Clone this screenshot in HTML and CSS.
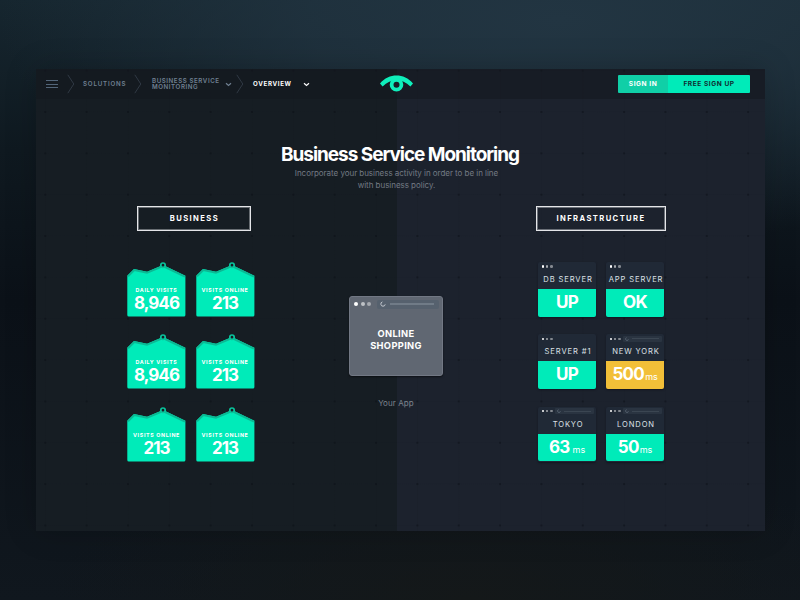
FILE: index.html
```html
<!DOCTYPE html>
<html lang="en">
  <head>
    <meta charset="utf-8">
    <title>Business Service Monitoring</title>
    <link rel="stylesheet" href="styles.css">
  </head>
  <body>
    <!-- shared shapes -->
    <svg class="defs" width="0" height="0">
      <symbol id="crumb" viewBox="0 0 8 20"><path d="M.8 .8 6.8 10 .8 19.2"/></symbol>
      <symbol id="down" viewBox="0 0 7 5"><path d="M1 1.2 3.5 3.4 6 1.2"/></symbol>
      <symbol id="spin" viewBox="0 0 6 6"><path d="M2.4 .9A2.2 2.2 0 1 0 5.2 3.4"/></symbol>
      <symbol id="chart" viewBox="0 0 59 56">
        <path fill="#00ebb9" d="M.3 13.8 7 7 20 9.8 36 3 58.4 13.8V53Q58.4 54.5 56.9 54.5H1.8Q.3 54.5 .3 53Z"/>
        <path fill="none" stroke="#0bb994" stroke-width="2" d="M1 14.2 7.3 8 20 10.8 36 4.2 57.9 14.6"/>
        <circle cx="36" cy="3.2" r="2.2" fill="#171d24" stroke="#09c49c" stroke-width="1.7"/>
      </symbol>
    </svg>

    <div class="panel">
      <header class="header">
        <nav class="nav">
          <span class="burger"><i></i><i></i><i></i></span>
          <svg class="crumb"><use href="#crumb"/></svg>
          <a class="link solutions">SOLUTIONS</a>
          <svg class="crumb"><use href="#crumb"/></svg>
          <a class="link service">BUSINESS SERVICE<br>MONITORING</a>
          <svg class="down"><use href="#down"/></svg>
          <svg class="crumb"><use href="#crumb"/></svg>
          <a class="link overview">OVERVIEW</a>
          <svg class="down white"><use href="#down"/></svg>
        </nav>
        <svg class="logo" viewBox="0 0 34 18">
          <path fill="#0fefbb" d="M0 8.4C9-2.2 24-2.2 33 8.4L30.4 11.6C22 3.2 11 3.2 2.6 11.6Z"/>
          <circle cx="16.5" cy="9.8" r="4.9" fill="#181e26" stroke="#0fefbb" stroke-width="3.8"/>
        </svg>
        <div class="auth">
          <a class="signin">SIGN IN</a>
          <a class="signup">FREE SIGN UP</a>
        </div>
      </header>

      <div class="intro">
        <h1>Business Service Monitoring</h1>
        <p>Incorporate your business activity in order to be in line<br>with business policy.</p>
      </div>

      <main class="content">
        <section class="business">
          <h2 class="label">BUSINESS</h2>
          <div class="cards">
            <div class="stat"><svg><use href="#chart"/></svg><div><small>DAILY VISITS</small><b>8,946</b></div></div>
            <div class="stat"><svg><use href="#chart"/></svg><div><small>VISITS ONLINE</small><b>213</b></div></div>
            <div class="stat"><svg><use href="#chart"/></svg><div><small>DAILY VISITS</small><b>8,946</b></div></div>
            <div class="stat"><svg><use href="#chart"/></svg><div><small>VISITS ONLINE</small><b>213</b></div></div>
            <div class="stat"><svg><use href="#chart"/></svg><div><small>VISITS ONLINE</small><b>213</b></div></div>
            <div class="stat"><svg><use href="#chart"/></svg><div><small>VISITS ONLINE</small><b>213</b></div></div>
          </div>
        </section>

        <section class="app">
          <div class="window">
            <div class="bar"><i></i><i></i><i></i><span class="url"><svg><use href="#spin"/></svg><em></em></span></div>
            <div class="name">ONLINE<br>SHOPPING</div>
          </div>
          <p>Your App</p>
        </section>

        <section class="infra">
          <h2 class="label">INFRASTRUCTURE</h2>
          <div class="cards">
            <div class="server">
              <div class="bar"><i></i><i></i><i></i></div>
              <div class="name">DB SERVER</div>
              <div class="value">UP</div>
            </div>
            <div class="server">
              <div class="bar"><i></i><i></i><i></i></div>
              <div class="name">APP SERVER</div>
              <div class="value">OK</div>
            </div>
            <div class="server">
              <div class="bar"><i></i><i></i><i></i></div>
              <div class="name">SERVER #1</div>
              <div class="value">UP</div>
            </div>
            <div class="server">
              <div class="bar"><i></i><i></i><i></i><span class="url"><svg><use href="#spin"/></svg><em></em></span></div>
              <div class="name">NEW YORK</div>
              <div class="value warn">500<small>ms</small></div>
            </div>
            <div class="server">
              <div class="bar"><i></i><i></i><i></i><span class="url"><svg><use href="#spin"/></svg><em></em></span></div>
              <div class="name">TOKYO</div>
              <div class="value">63<small class="spaced">ms</small></div>
            </div>
            <div class="server">
              <div class="bar"><i></i><i></i><i></i><span class="url"><svg><use href="#spin"/></svg><em></em></span></div>
              <div class="name">LONDON</div>
              <div class="value">50<small>ms</small></div>
            </div>
          </div>
        </section>
      </main>
    </div>
  </body>
</html>
```
FILE: styles.css
```css
* {
  box-sizing: border-box;
}
body {
  margin: 0;
  width: 800px;
  height: 600px;
  padding: 69px 35px 0 36px;
  overflow: hidden;
  font-family: Inter, sans-serif;
  color: #fff;
  background:
    radial-gradient(ellipse 560px 230px at 560px 20px, #223542 0%, rgba(34, 53, 66, 0.75) 45%, rgba(34, 53, 66, 0) 100%),
    radial-gradient(ellipse 420px 150px at 470px 600px, #141819 0%, rgba(20, 24, 25, 0) 100%),
    linear-gradient(#16262f 0, #0f1920 150px, #0b1118 300px, #10171e 600px);
}
h1, h2, p {
  margin: 0;
}
svg {
  display: block;
  flex: none;
}
.defs {
  position: absolute;
}

/* two-tone panel with dotted grid */
.panel {
  width: 729px;
  height: 462px;
  background:
    radial-gradient(circle, rgba(8, 12, 18, 0.45) 0.6px, transparent 1.3px) -11.4px -19px / 41.35px 41.35px,
    linear-gradient(rgba(10, 15, 22, 0.06) 1px, transparent 1px) 0 1px / 41.35px 41.35px,
    linear-gradient(90deg, rgba(10, 15, 22, 0.06) 1px, transparent 1px) 9px 0 / 41.35px 41.35px,
    linear-gradient(90deg, #161d23 361px, #1c222d 361px);
  box-shadow: 0 0 30px rgba(0, 0, 0, 0.2);
}

.header {
  display: flex;
  align-items: center;
  height: 30px;
  padding-right: 15px;
  background: rgba(20, 24, 31, 0.55);
}
.nav {
  display: flex;
  align-items: center;
  width: 344px;
  padding-left: 10px;
}
.burger {
  display: grid;
  gap: 2.5px;
  width: 12px;
  margin-right: 9px;
}
.burger i {
  height: 1px;
  background: #53667a;
}
.crumb {
  width: 8px;
  height: 20px;
  fill: none;
  stroke: #303944;
}
.link {
  font-size: 6.2px;
  line-height: 6px;
  font-weight: 600;
  letter-spacing: 0.8px;
  color: #708092;
  white-space: nowrap;
}
.solutions {
  width: 51px;
  margin-left: 8px;
}
.service {
  width: 73px;
  margin-left: 10px;
  letter-spacing: 0.56px;
}
.overview {
  width: 50px;
  margin-left: 9px;
  font-weight: 700;
  letter-spacing: 0.66px;
  color: #fff;
}
.down {
  width: 7px;
  height: 5px;
  margin-right: 4px;
  fill: none;
  stroke: #708092;
  stroke-width: 1.2;
}
.down.white {
  stroke: #fff;
}
.logo {
  width: 34px;
  height: 18px;
}
.auth {
  display: flex;
  margin-left: auto;
  font-size: 6.6px;
  line-height: 18px;
  font-weight: 700;
  text-align: center;
  letter-spacing: 0.55px;
  border-radius: 1px;
  overflow: hidden;
}
.signin {
  width: 50px;
  background: #10cfa7;
}
.signup {
  width: 82px;
  color: #102b31;
  background: #00ebb9;
}

.intro {
  height: 107px;
  padding-top: 43px;
  text-align: center;
}
.intro h1 {
  font-size: 19px;
  line-height: 26px;
  font-weight: 700;
  letter-spacing: -1.04px;
  margin-left: -1px;
}
.intro p {
  margin: -1px 8px 0 0;
  font-size: 8px;
  line-height: 12px;
  letter-spacing: -0.04px;
  color: #737a84;
}

.content {
  display: flex;
  padding-left: 91px;
}
.label {
  height: 25px;
  padding-top: 1px;
  font-size: 7.6px;
  line-height: 22px;
  font-weight: 700;
  letter-spacing: 1.4px;
  text-align: center;
  border: 1px solid #e4e5e8;
  box-shadow: inset 0 0 0 1px rgba(228, 229, 232, 0.4);
}
.business .label {
  width: 114px;
  margin-left: 10.4px;
}
.infra .label {
  width: 130px;
  margin-left: -2px;
}
.cards {
  display: grid;
  grid-template-columns: 59px 59px;
  grid-auto-rows: 55px;
  gap: 17.4px 9.5px;
  margin-top: 31px;
}

/* business cards */
.business {
  width: 222px;
}
.stat {
  display: grid;
  text-align: center;
}
.stat > * {
  grid-area: 1 / 1;
}
.stat svg {
  width: 59px;
  height: 56px;
}
.stat div {
  padding-top: 25px;
}
.stat small {
  display: block;
  font-size: 5.3px;
  line-height: 6px;
  font-weight: 700;
  letter-spacing: 0.65px;
  white-space: nowrap;
}
.stat b {
  display: block;
  font-size: 17px;
  line-height: 20px;
  letter-spacing: -0.95px;
}

/* browser window bits */
.bar {
  display: flex;
  align-items: center;
}
.bar i {
  flex: none;
  border-radius: 50%;
  background: #fff;
}
.bar i:nth-child(2) {
  opacity: 0.6;
}
.bar i:nth-child(3) {
  opacity: 0.45;
}
.url {
  display: flex;
  align-items: center;
  flex: 1;
}
.url svg {
  fill: none;
  stroke: #c3c8ce;
}
.url em {
  flex: 1;
  background: #707b87;
}

.app {
  width: 94px;
  margin-top: 90px;
}
.window {
  height: 80px;
  border: 1px solid #727884;
  border-radius: 3px;
  background: #606772;
  box-shadow: 0 1px 2px rgba(0, 0, 0, 0.5);
}
.window .bar {
  height: 14px;
  gap: 2.5px;
  padding: 0 3px 0 4px;
}
.window .bar i {
  width: 4px;
  height: 4px;
}
.window .url {
  height: 9px;
  margin-left: 3px;
  padding: 0 5px 0 3px;
  border-radius: 2px;
  background: #56616e;
}
.window .url svg {
  width: 6px;
  height: 6px;
  margin-right: 4px;
}
.window .url em {
  height: 2px;
}
.window .name {
  margin-top: 17px;
  font-size: 9.3px;
  line-height: 12px;
  font-weight: 700;
  letter-spacing: 0.35px;
  text-align: center;
}
.app p {
  margin-top: 21px;
  font-size: 8px;
  line-height: 12px;
  text-align: center;
  letter-spacing: 0.1px;
  color: #7d848e;
}

/* infrastructure cards */
.infra {
  margin-left: 95px;
}
.infra .cards {
  grid-template-columns: 58px 58px;
  gap: 17.4px 10px;
}
.server {
  border-radius: 2px;
  background: #202936;
  box-shadow: 0 1px 2px rgba(10, 8, 20, 0.5);
}
.server .bar {
  height: 9px;
  gap: 2px;
  padding: 0 2px 0 3.5px;
}
.server .bar i {
  width: 2.4px;
  height: 2.4px;
}
.server .url {
  height: 6px;
  padding: 0 3px 0 2px;
  border-radius: 1px;
  background: #2a3441;
}
.server .url svg {
  width: 4px;
  height: 4px;
  margin-right: 3px;
  stroke: #657180;
}
.server .url em {
  height: 1px;
  background: #3b4652;
}
.server .name {
  height: 18px;
  padding-left: 2px;
  font-size: 7.6px;
  line-height: 17px;
  letter-spacing: 0.87px;
  text-align: center;
  white-space: nowrap;
  color: #dce0e5;
}
.value {
  height: 27.5px;
  font-size: 17px;
  line-height: 27px;
  font-weight: 700;
  letter-spacing: -0.7px;
  text-align: center;
  border-radius: 0 0 2px 2px;
  background: #00ebb9;
}
.value.warn {
  background: #f2bf38;
}
.value small {
  margin-left: 1px;
  font-size: 9px;
  font-weight: 400;
  letter-spacing: -0.1px;
}
.value .spaced {
  margin-left: 3px;
}
```
